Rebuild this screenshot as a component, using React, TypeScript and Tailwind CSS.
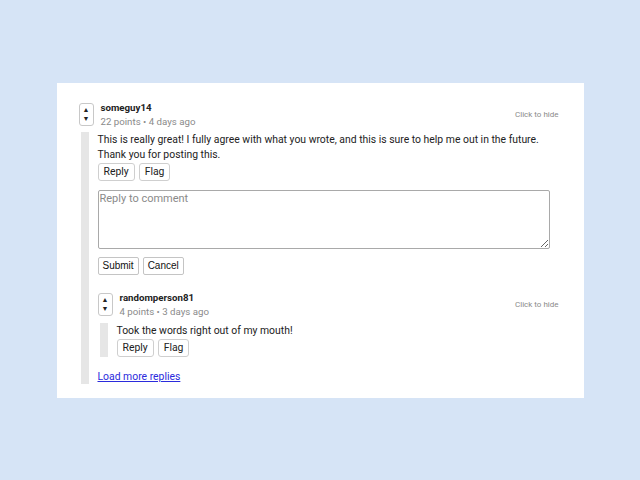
import React from 'react';

function VoteBox() {
  return (
    <div className="flex h-[23px] w-[15px] shrink-0 flex-col items-center justify-center rounded-[3px] border border-[#c8c8c8] bg-white text-[7px] leading-[9px] text-[#222]">
      <span>▲</span>
      <span>▼</span>
    </div>
  );
}

function SmallButton({ label }: { label: string }) {
  return (
    <button className="h-[18px] rounded-[3px] border border-[#cfcfcf] bg-white px-[5px] text-[10.4px] leading-[16px] text-[#222]">
      {label}
    </button>
  );
}

function FormButton({ label }: { label: string }) {
  return (
    <button className="h-[18px] rounded-[2px] border border-[#c4c4c4] bg-white px-[4px] font-['Liberation_Sans',Arial,sans-serif] text-[10px] leading-[16px] text-[#111]">
      {label}
    </button>
  );
}

function CommentHeader({ name, meta }: { name: string; meta: string }) {
  return (
    <div className="flex items-center">
      <VoteBox />
      <div className="ml-[7px] flex flex-col">
        <span className="text-[9.7px] font-bold leading-[14px] text-[#222]">{name}</span>
        <span className="text-[9.7px] leading-[14px] text-[#8a8a8a]">{meta}</span>
      </div>
      <span className="ml-auto text-[8px] text-[#8a8a8a]">Click to hide</span>
    </div>
  );
}

export default function App() {
  return (
    <div className="flex min-h-screen items-center justify-center bg-[#d6e4f6] font-['Roboto',sans-serif]">
      <div className="w-[527px] bg-white pb-[14px] pl-[22px] pr-[25px] pt-[18px]">
        <CommentHeader name="someguy14" meta="22 points • 4 days ago" />

        <div className="mt-[3px] flex">
          <div className="ml-[2px] w-[8px] shrink-0 bg-[#e6e6e6]" />
          <div className="ml-[9px] flex-1">
            <p className="text-[10.4px] leading-[15px] text-[#222]">
              This is really great! I fully agree with what you wrote, and this is sure to help me out in the
              future. Thank you for posting this.
            </p>
            <div className="mt-[1px] flex gap-[4px]">
              <SmallButton label="Reply" />
              <SmallButton label="Flag" />
            </div>

            <textarea
              placeholder="Reply to comment"
              className="mt-[9px] block h-[59px] w-[452px] rounded-[2px] border border-[#a9a9a9] p-0 pl-[1px] text-[11px] leading-[15px] text-[#222] placeholder:text-[#8a8a8a]"
            />
            <div className="mt-[8px] flex gap-[4px]">
              <FormButton label="Submit" />
              <FormButton label="Cancel" />
            </div>

            {/* nested reply */}
            <div className="mt-[16px]">
              <CommentHeader name="randomperson81" meta="4 points • 3 days ago" />
              <div className="mt-[4px] flex">
                <div className="ml-[2px] w-[8px] shrink-0 bg-[#e6e6e6]" />
                <div className="ml-[9px] flex-1">
                  <p className="text-[10.4px] leading-[15px] text-[#222]">Took the words right out of my mouth!</p>
                  <div className="mt-[1px] flex gap-[4px]">
                    <SmallButton label="Reply" />
                    <SmallButton label="Flag" />
                  </div>
                </div>
              </div>
            </div>

            <a href="#" className="mt-[12px] block text-[10.4px] leading-[15px] text-[#2b2bdc] underline">
              Load more replies
            </a>
          </div>
        </div>
      </div>
    </div>
  );
}
